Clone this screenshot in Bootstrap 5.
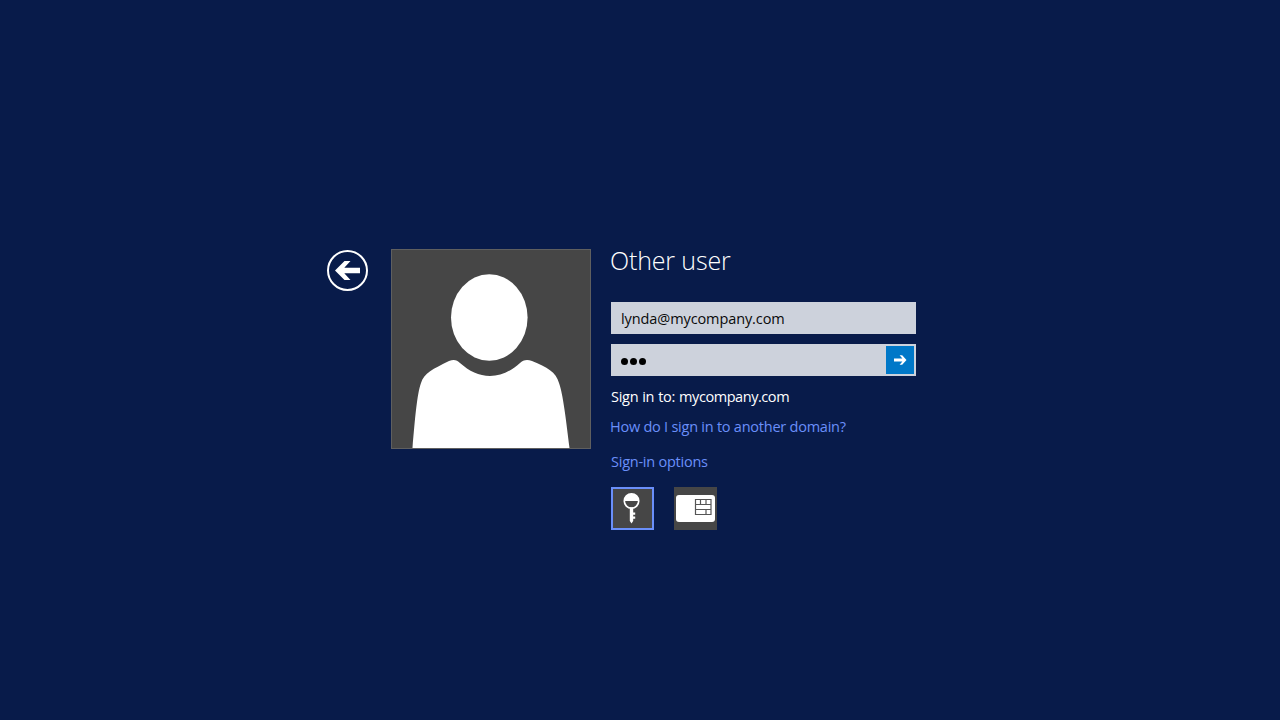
<!DOCTYPE html>
<html lang="en">
<head>
<meta charset="utf-8">
<title>Other user</title>
<link href="https://cdn.jsdelivr.net/npm/bootstrap@5.3.0/dist/css/bootstrap.min.css" rel="stylesheet">
<style>
html,body{height:100%}
body{background:#081b4a;font-family:"Open Sans","Noto Sans","Liberation Sans",sans-serif;color:#fff;overflow:hidden}
.stage{padding:249px 0 0 327px;height:720px}
.back-btn{width:41px;height:41px;margin-top:1px;margin-right:23px;padding:0;background:none;border:0;display:block}
.avatar-box{width:200px;height:200px;background:#464646;border:1px solid #5f5f5f;margin-right:20px;flex:none}
.avatar-box svg{display:block}
.form-col{width:305px}
.title-text{font-size:25px;font-weight:300;line-height:22px;margin:0 0 31px -1px;letter-spacing:-.15px;height:22px}
.win-field{height:32px;background:#cdd2dc;color:#0a0a0a;font-size:14.5px;line-height:33px;padding-left:10px;letter-spacing:-.1px}
.win-field.pw{margin-top:10px;padding-right:2px;padding-top:2px;padding-bottom:2px;line-height:28px}
.pw-dots{font-size:0;gap:2px;padding-top:2px}
.pw-dot{width:7px;height:7px;border-radius:50%;background:#000;display:block}
.go-btn{width:28px;height:28px;padding:0;border:0;background:#0078c8;display:block}
.go-btn svg,.tile svg{display:block}
.info-line{font-size:14.5px;line-height:20px;margin-top:11px;letter-spacing:-.28px;word-spacing:.5px}
.domain-name{letter-spacing:-.44px}
.win-link{display:block;color:#6a8ffa;font-size:14.5px;line-height:20px;text-decoration:none;letter-spacing:-.24px}
.win-link.a{margin-top:10px;margin-left:-1px}
.win-link.b{margin-top:15px}
.tile-row{margin-top:15px;gap:20px}
.tile{width:43px;height:43px;background:#464646;padding:0;border:0;display:block}
.tile.on{border:2px solid #6a8ffa}
</style>
</head>
<body>
<main class="stage d-flex align-items-start">
  <button class="back-btn" type="button" aria-label="Back">
    <svg width="41" height="41" viewBox="0 0 41 41"><circle cx="20.5" cy="20.5" r="19.5" fill="none" stroke="#fff" stroke-width="2"/><path d="M8 20.5 17.5 11h6l-6.2 6.7H33v5.6H17.3l6.2 6.7h-6z" fill="#fff"/></svg>
  </button>
  <div class="avatar-box">
    <svg width="198" height="198" viewBox="0 0 198 198"><ellipse cx="97.3" cy="67.5" rx="38.3" ry="43.2" fill="#fff"/><path d="M20.5 198C23 169 25 144 29 133 32 123 41 119 57 111 62 109 65 110 68 113 77 121 87 126 98 126 109 126 119 121 128 113 131 110 135 109 140 111 155 117 164 122 167 133 171 144 174 169 177.5 198Z" fill="#fff"/></svg>
  </div>
  <div class="form-col">
    <h1 class="title-text">Other user</h1>
    <div class="win-field">lynda@mycompany.com</div>
    <div class="win-field pw d-flex justify-content-between align-items-center">
      <span class="pw-dots d-flex" aria-label="Password"><i class="pw-dot"></i><i class="pw-dot"></i><i class="pw-dot"></i></span>
      <button class="go-btn" type="button" aria-label="Submit">
        <svg width="28" height="28" viewBox="0 0 28 28"><path d="M8 12.5h8.4l-2.8-3.2h2.6l4.3 4.7-4.3 4.7h-2.6l2.8-3.2H8z" fill="#fff"/></svg>
      </button>
    </div>
    <div class="info-line">Sign in to: <span class="domain-name">mycompany.com</span></div>
    <a class="win-link a" href="#">How do I sign in to another domain?</a>
    <a class="win-link b" href="#">Sign-in options</a>
    <div class="tile-row d-flex">
      <button class="tile on" type="button" aria-label="Password">
        <svg width="39" height="39" viewBox="0 0 39 39"><circle cx="18.5" cy="12" r="7.2" fill="#464646" stroke="#fff" stroke-width="1.7"/><path d="M11.3 12a7.2 7.2 0 0 1 14.4 0z" fill="#fff"/><path d="M16.8 18.5h3.4v13.5l-1.7 2.4-1.7-2.4z" fill="#fff"/><path d="M20 23.5h2.2v2.2H20zM20 27.5h2.2v2.2H20z" fill="#fff"/></svg>
      </button>
      <button class="tile" type="button" aria-label="Smart card">
        <svg width="43" height="43" viewBox="0 0 43 43"><rect x="2" y="8" width="39" height="27" rx="3" fill="#fff"/><path d="M21.5 12.5h15.5v15h-15.5zM21.5 17.5h15.5M21.5 22.5h15.5M26.5 12.5v5M32 12.5v5M32 22.5v5" fill="none" stroke="#555" stroke-width="1.2"/></svg>
      </button>
    </div>
  </div>
</main>
<script src="https://cdn.jsdelivr.net/npm/bootstrap@5.3.0/dist/js/bootstrap.bundle.min.js"></script>
</body>
</html>
